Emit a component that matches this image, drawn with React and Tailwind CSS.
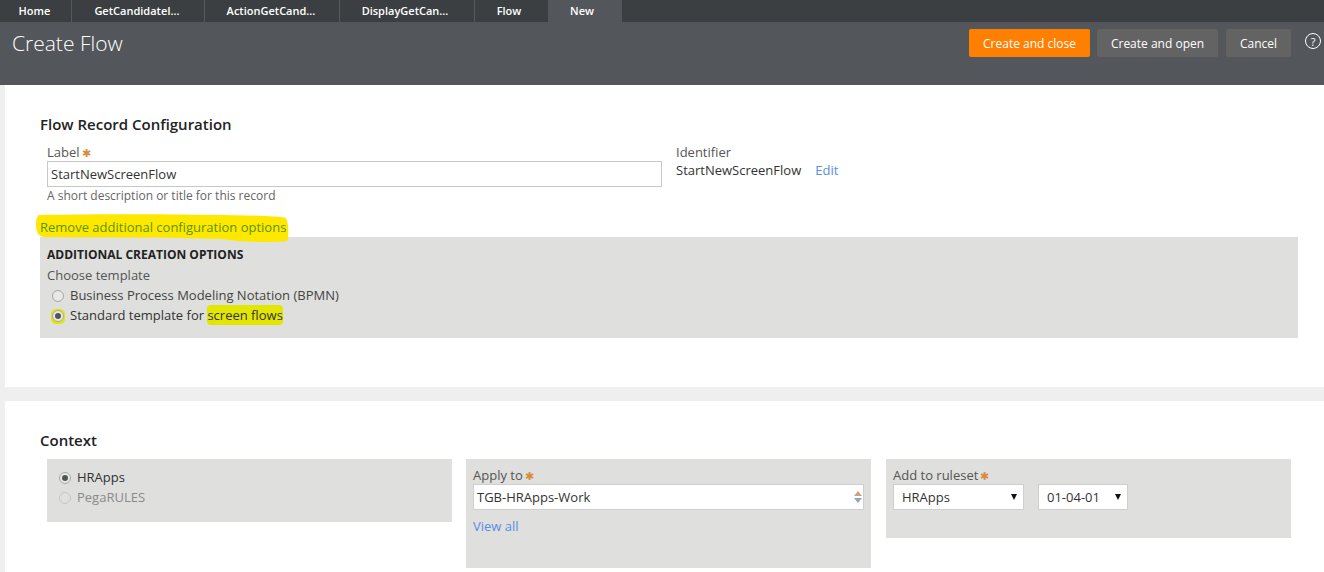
import React from 'react';

const tabs = [
  { name: 'Home', cls: 'w-[72px] pr-[2px]' },
  { name: 'GetCandidateI...', cls: 'w-[133px] pr-[2px]' },
  { name: 'ActionGetCand...', cls: 'w-[135px] pr-[2px]' },
  { name: 'DisplayGetCan...', cls: 'w-[135px] pr-[4px]' },
  { name: 'Flow', cls: 'w-[73px] pr-[5px] border-r-0' },
];

const Star = () => <span className="text-[#d98a3a] ml-[2px] text-[11px]">✱</span>;

const Radio = ({ checked, disabled }) => (
  <span className={`w-3 h-3 rounded-full border flex items-center justify-center shrink-0 ${disabled ? 'border-[#c6c6c6] bg-[#e0e0de]' : 'border-[#a8a8a8] bg-[#e8e8e8]'}`}>
    {checked && <span className="w-[6px] h-[6px] rounded-full bg-[#555555]" />}
  </span>
);

const SelectBox = ({ value, className }) => (
  <div className={`h-[26px] bg-white border border-[#cfcfcf] flex items-center justify-between text-[13px] text-[#333333] pl-2 pr-[6px] ${className}`}>
    <span className="pt-[1px]">{value}</span>
    <svg width="6" height="6" viewBox="0 0 6 6"><path d="M0 0h6L3 6z" fill="#111111" /></svg>
  </div>
);

export default function App() {
  return (
    <div className="w-[1324px] h-[572px] overflow-hidden bg-[#efefef] text-[13px] text-[#444444]" style={{ fontFamily: '"Open Sans", "Noto Sans", sans-serif' }}>
      <div className="h-[22px] bg-[#3b3f41] flex text-[11px] font-semibold text-white">
        {tabs.map((t) => (
          <div key={t.name} className={`${t.cls} border-r border-[#55595b] flex items-center justify-center`}>{t.name}</div>
        ))}
        <div className="w-[74px] pr-[6px] bg-[#53565b] flex items-center justify-center">New</div>
      </div>

      <div className="h-[63px] bg-[#53565b] flex justify-between pl-3 pr-[3px]">
        <h1 className="text-[21px] font-light text-white leading-[28px] mt-[7px]">Create Flow</h1>
        <div className="flex items-start gap-2 pt-[7px] text-[12px] font-normal text-white">
          <button className="w-[121px] h-7 pt-[1px] -mr-[1px] bg-[#ff8000] rounded-[2px]">Create and close</button>
          <button className="w-[121px] h-7 pt-[1px] bg-[#636363] rounded-[2px]">Create and open</button>
          <button className="w-[65px] h-7 pt-[1px] bg-[#636363] rounded-[2px]">Cancel</button>
          <span className="w-4 h-4 ml-[6px] mt-[4px] rounded-full border border-white flex items-center justify-center text-[11px] leading-none">?</span>
        </div>
      </div>

      <section className="ml-[5px] h-[302px] bg-white pl-[35px] pr-[26px] pt-[29px]">
        <h2 className="text-[15px] font-semibold text-[#222222] leading-5">Flow Record Configuration</h2>
        <div className="flex mt-[11px] ml-[7px]">
          <div className="w-[615px]">
            <div className="text-[13px] leading-[14px] text-[#555555] h-[16px]">Label<Star /></div>
            <input readOnly value="StartNewScreenFlow" className="w-full h-[26px] border border-[#c8c8c8] px-[3px] text-[13px] text-[#333333] outline-none" />
            <div className="text-[12px] leading-[18px] text-[#666666]">A short description or title for this record</div>
          </div>
          <div className="ml-[14px] -mt-[1px]">
            <div className="leading-[16px] text-[#555555] h-[16px]">Identifier</div>
            <div className="leading-[20px] text-[#333333]">StartNewScreenFlow<span className="ml-[14px] text-[#5a8de0]">Edit</span></div>
          </div>
        </div>
        <div className="relative z-10 mt-[10px] -ml-[4px] w-fit h-[26px] px-1 flex items-center text-[13px] text-[#5a9400]">
          <svg className="absolute left-0 -top-[1px]" width="253" height="29" viewBox="0 0 253 29">
            <path d="M3 1 C60 0 130 0 175 1 C210 1 240 2 250 4 C253 10 253 24 251 27 C235 29 205 28 185 25 C130 23 60 24 8 23 C2 22 0 18 0 10 C0 5 1 2 3 1Z" fill="#ffe800" />
          </svg>
          <span className="relative">Remove additional configuration options</span>
        </div>
        <div className="h-[101px] -mt-[4px] bg-[#dfdfdd] px-[7px] pt-[10px]">
          <div className="text-[12px] font-bold text-[#222222] leading-4">ADDITIONAL CREATION OPTIONS</div>
          <div className="text-[13px] leading-5 mt-[2px] text-[#555555]">Choose template</div>
          <div className="flex items-center gap-[6px] ml-[5px] h-5 mt-[1px]"><Radio /><span className="text-[#444444]">Business Process Modeling Notation (BPMN)</span></div>
          <div className="flex items-center gap-[6px] ml-[5px] h-5 relative">
            <span className="absolute -left-[1px] top-[3px] w-[14px] h-[15px] rounded-[5px] bg-[#e3e600]" />
            <span className="relative"><Radio checked /></span>
            <span className="relative text-[#333333]">Standard template for <span className="bg-[#e3e600] rounded-[4px] py-[1px]">screen flows</span></span>
          </div>
        </div>
      </section>

      <section className="ml-[5px] mt-[14px] h-[171px] bg-white rounded-tl-[2px] pl-[35px] pt-[29px]">
        <h2 className="text-[15px] font-semibold text-[#222222] leading-5">Context</h2>
        <div className="flex items-start mt-[9px] ml-[7px]">
          <div className="w-[405px] h-[63px] bg-[#dfdfdd] pl-3 pt-[9px]">
            <div className="flex items-center gap-[6px] h-5"><Radio checked /><span className="text-[#333333]">HRApps</span></div>
            <div className="flex items-center gap-[6px] h-5"><Radio disabled /><span className="text-[#8a8a8a]">PegaRULES</span></div>
          </div>
          <div className="w-[405px] h-[109px] ml-[14px] bg-[#dfdfdd] px-[7px] pt-[7px]">
            <div className="leading-[18px] h-[18px] text-[#555555]">Apply to<Star /></div>
            <div className="h-[26px] bg-white border border-[#cfcfcf] flex items-center justify-between pl-[3px] pr-[1px] text-[#333333]">
              <span className="pt-[1px]">TGB-HRApps-Work</span>
              <svg width="8" height="14" viewBox="0 0 8 14"><path d="M0 6l4-5 4 5z" fill="#c9a27f" /><path d="M0 8l4 5 4-5z" fill="#8fa8bb" /></svg>
            </div>
            <div className="mt-[6px] leading-5 text-[#5a8de0]">View all</div>
          </div>
          <div className="w-[405px] h-[79px] ml-[15px] bg-[#dfdfdd] px-[7px] pt-[7px]">
            <div className="leading-[18px] h-[18px] text-[#555555]">Add to ruleset<Star /></div>
            <div className="flex gap-[14px]">
              <SelectBox value="HRApps" className="w-[131px]" />
              <SelectBox value="01-04-01" className="w-[90px]" />
            </div>
          </div>
        </div>
      </section>
    </div>
  );
}
